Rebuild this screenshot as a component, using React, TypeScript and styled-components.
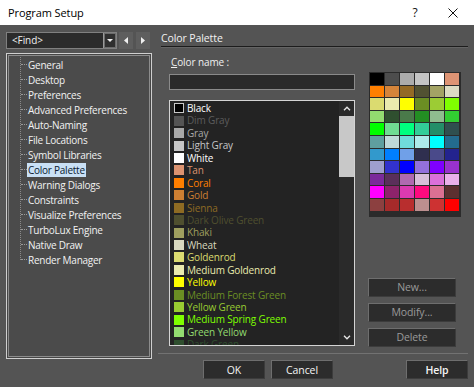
import React from "react";
import styled, { createGlobalStyle } from "styled-components";

const Global = createGlobalStyle`
  html, body { margin: 0; padding: 0; background: #545454; }
  body { font-family: "Open Sans", "Noto Sans", "DejaVu Sans", sans-serif; }
  #root { width: 474px; height: 387px; }
`;

const Window = styled.div`
  width: 474px;
  height: 387px;
  display: flex;
  flex-direction: column;
  background: #545454;
  overflow: hidden;
`;

const TitleBar = styled.div`
  height: 25px;
  flex-shrink: 0;
  background: #ffffff;
  display: flex;
  align-items: center;
  padding: 0 2px 0 8px;
  font-size: 11px;
  letter-spacing: -0.1px;
  color: #000;
`;

const Title = styled.span`
  flex: 1;
`;

const TitleButton = styled.div`
  width: 38px;
  height: 25px;
  display: flex;
  align-items: center;
  justify-content: center;
  font-size: 12px;
  color: #111;
`;

const Body = styled.div`
  flex: 1;
  display: flex;
  min-height: 0;
`;

const LeftCol = styled.div`
  width: 146px;
  padding: 7px 0 0 6px;
  display: flex;
  flex-direction: column;
  gap: 4px;
`;

const FindRow = styled.div`
  display: flex;
  align-items: stretch;
  height: 17px;
`;

const FindCombo = styled.div`
  width: 111px;
  display: flex;
  background: #2b2b2b;
  border: 1px solid #808080;
  box-sizing: border-box;
`;

const FindText = styled.div`
  flex: 1;
  color: #f0f0f0;
  font-size: 10px;
  letter-spacing: -0.1px;
  line-height: 15px;
  padding-left: 5px;
`;

const DropButton = styled.div`
  width: 12px;
  border-left: 1px solid #9a9a9a;
  box-shadow: inset 0 0 0 1px #6c6c6c;
  display: flex;
  align-items: center;
  justify-content: center;
  background: #2f2f2f;
`;

const NavButton = styled.div<{ $gap: number }>`
  width: 14px;
  margin-left: ${(p) => p.$gap}px;
  background: #5e5e5e;
  display: flex;
  align-items: center;
  justify-content: center;
`;

const Tree = styled.div`
  height: 306px;
  box-sizing: border-box;
  border: 1px solid #cfcfcf;
  box-shadow: inset 0 0 0 1px #464646, inset 0 0 0 2px #8c8c8c;
  background: #4b4b4b;
  padding: 3px 0 0 13px;
`;

const TreeList = styled.div`
  border-left: 1px dotted #8a8a8a;
  padding-left: 7px;
  height: 203px;
  box-sizing: border-box;
`;

const TreeItem = styled.div<{ $selected?: boolean }>`
  position: relative;
  height: 15px;
  display: flex;
  align-items: center;
  font-size: 10px;
  letter-spacing: -0.25px;
  color: #f2f2f2;
  white-space: nowrap;
  &::before {
    content: "";
    position: absolute;
    left: -7px;
    top: 7px;
    width: 6px;
    border-top: 1px dotted #9a9a9a;
  }
  span {
    padding: 0 1px;
    line-height: 14px;
    background: ${(p) => (p.$selected ? "#c9e0f5" : "transparent")};
    color: ${(p) => (p.$selected ? "#0a1a30" : "#f2f2f2")};
    margin-left: -1px;
  }
`;

const RightCol = styled.div`
  flex: 1;
  padding: 0 6px 0 9px;
  display: flex;
  flex-direction: column;
`;

const Header = styled.div`
  height: 22px;
  flex-shrink: 0;
  border-bottom: 1px solid #1c1c1c;
  box-shadow: 0 1px 0 #646464;
  color: #f2f2f2;
  font-size: 10.5px;
  letter-spacing: -0.1px;
  line-height: 14px;
  padding-top: 6px;
  box-sizing: border-box;
`;

const Content = styled.div`
  height: 306px;
  flex-shrink: 0;
  display: flex;
  gap: 14px;
  padding-left: 8px;
`;

const LeftSub = styled.div`
  width: 186px;
  display: flex;
  flex-direction: column;
`;

const Label = styled.div`
  margin-top: 8px;
  margin-left: 2px;
  height: 14px;
  line-height: 14px;
  font-size: 10px;
  letter-spacing: -0.1px;
  color: #f0f0f0;
  u { text-decoration: underline; text-underline-offset: 1px; }
`;

const Input = styled.div`
  margin-top: 5px;
  height: 16px;
  box-sizing: border-box;
  background: #2a2a2a;
  border: 1px solid #8a8a8a;
`;

const ListBox = styled.div`
  margin-top: 10px;
  height: 246px;
  box-sizing: border-box;
  border: 1px solid #d4d4d4;
  background: #232323;
  display: flex;
  overflow: hidden;
`;

const Items = styled.div`
  flex: 1;
  padding: 1px 0 0 4px;
  overflow: hidden;
`;

const Item = styled.div<{ $text: string }>`
  height: 12.45px;
  line-height: 12.45px;
  display: flex;
  align-items: center;
  gap: 3px;
  font-size: 10px;
  letter-spacing: -0.15px;
  color: ${(p) => p.$text};
  white-space: nowrap;
`;

const Swatch = styled.div<{ $color: string; $framed?: boolean }>`
  width: 10px;
  height: 10px;
  box-sizing: border-box;
  background: ${(p) => p.$color};
  border: 1px solid ${(p) => (p.$framed ? "#c8c8c8" : p.$color)};
  flex-shrink: 0;
`;

const ScrollBar = styled.div`
  width: 15px;
  display: flex;
  flex-direction: column;
  background: #2a2a2a;
`;

const ScrollArrow = styled.div`
  height: 15px;
  display: flex;
  align-items: center;
  justify-content: center;
`;

const Thumb = styled.div`
  height: 61px;
  background: #c8c8c8;
`;

const Track = styled.div`
  flex: 1;
`;

const RightSub = styled.div`
  width: 99px;
  padding-top: 25px;
  display: flex;
  flex-direction: column;
`;

const Palette = styled.div`
  width: fit-content;
  display: grid;
  grid-template-columns: repeat(6, 14px);
  grid-auto-rows: 11.6px;
  gap: 1px;
  padding: 1px 2px 6px 1px;
  background: #2b2b2b;
`;

const Cell = styled.div<{ $color: string }>`
  background: ${(p) => p.$color};
`;

const SideButtons = styled.div`
  margin-top: 61px;
  margin-left: -1px;
  display: flex;
  flex-direction: column;
  gap: 6px;
`;

const Btn = styled.div<{ $w: number; $disabled?: boolean; $strong?: boolean }>`
  width: ${(p) => p.$w}px;
  height: 19px;
  box-sizing: border-box;
  background: #2c2c2c;
  border: 1px solid #6e6e6e;
  border-right-color: #3c3c3c;
  border-bottom-color: #3c3c3c;
  display: flex;
  align-items: center;
  justify-content: center;
  font-size: 10.5px;
  letter-spacing: -0.1px;
  color: ${(p) => (p.$disabled ? "#9a9a9a" : "#f4f4f4")};
  font-weight: ${(p) => (p.$strong ? 600 : 400)};
`;

const Separator = styled.div`
  height: 1px;
  background: #727272;
  margin-left: -3px;
  flex-shrink: 0;
`;

const ButtonRow = styled.div`
  display: flex;
  padding: 6px 0 0 42px;
  gap: 6px;
`;

const Spacer = styled.div`
  flex: 1;
`;

const Tri = ({ dir }: { dir: "down" | "left" | "right" }) => {
  const pts =
    dir === "down" ? "0,0 6,0 3,3" : dir === "left" ? "4,0 4,7 0,3.5" : "0,0 0,7 4,3.5";
  const w = dir === "down" ? 6 : 4;
  const h = dir === "down" ? 3 : 7;
  return (
    <svg width={w} height={h} viewBox={`0 0 ${w} ${h}`}>
      <polygon points={pts} fill="#f0f0f0" />
    </svg>
  );
};

const Chevron = ({ up }: { up?: boolean }) => (
  <svg width="8" height="5" viewBox="0 0 8 5">
    <polyline
      points={up ? "1,4.2 4,1.2 7,4.2" : "1,0.8 4,3.8 7,0.8"}
      fill="none"
      stroke="#e8e8e8"
      strokeWidth="1.3"
    />
  </svg>
);

const treeItems = [
  "General",
  "Desktop",
  "Preferences",
  "Advanced Preferences",
  "Auto-Naming",
  "File Locations",
  "Symbol Libraries",
  "Color Palette",
  "Warning Dialogs",
  "Constraints",
  "Visualize Preferences",
  "TurboLux Engine",
  "Native Draw",
  "Render Manager",
];

const colors: { name: string; c: string; t?: string }[] = [
  { name: "Black", c: "#000000", t: "#ffffff" },
  { name: "Dim Gray", c: "#545454", t: "#5c5c5c" },
  { name: "Gray", c: "#a8a8a8" },
  { name: "Light Gray", c: "#c6c6c6" },
  { name: "White", c: "#ffffff" },
  { name: "Tan", c: "#db9370" },
  { name: "Coral", c: "#ff7f00" },
  { name: "Gold", c: "#cd7f32" },
  { name: "Sienna", c: "#8e6b23" },
  { name: "Dark Olive Green", c: "#4f4f2f" },
  { name: "Khaki", c: "#9f9f5f" },
  { name: "Wheat", c: "#d8d8bf" },
  { name: "Goldenrod", c: "#dbdb70" },
  { name: "Medium Goldenrod", c: "#eaeaae" },
  { name: "Yellow", c: "#ffff00" },
  { name: "Medium Forest Green", c: "#6b8e23" },
  { name: "Yellow Green", c: "#99cc32" },
  { name: "Medium Spring Green", c: "#7fff00" },
  { name: "Green Yellow", c: "#93db70" },
  { name: "Dark Green", c: "#2f4f2f" },
];

const palette = [
  "#000000", "#4d4d4d", "#acacac", "#c4c4c4", "#ffffff", "#de9474",
  "#ff7f00", "#d4843a", "#946a26", "#515132", "#a3a365", "#dcdcc3",
  "#dbdb70", "#eaeaae", "#ffff00", "#6b8e23", "#9ccc34", "#80ff00",
  "#93db70", "#2f4f2f", "#4a7a4a", "#238e23", "#8fbc8f", "#32cd32",
  "#00ff00", "#70db93", "#00ff7f", "#32cd99", "#238e68", "#2f4f4f",
  "#5f9f9f", "#c0d9d9", "#70dbdb", "#adeaea", "#00ffff", "#236b8e",
  "#3299cc", "#007fff", "#70a0e8", "#2f2f4f", "#4a4a8a", "#23238e",
  "#9f9fcf", "#3232cd", "#0000ff", "#9370db", "#7f00ff", "#9932cd",
  "#7a2a9a", "#5a2f5a", "#b06ab0", "#d8bfd8", "#db70db", "#eab0ea",
  "#ff00ff", "#8e236b", "#db3ab0", "#ff0a7f", "#db7093", "#5c3030",
  "#8c4040", "#a62a2a", "#b82e2e", "#bc8f8f", "#cd3232", "#ff0000",
];

export default function App() {
  return (
    <>
      <Global />
      <Window>
        <TitleBar>
          <Title>Program Setup</Title>
          <TitleButton>?</TitleButton>
          <TitleButton>
            <svg width="10" height="10" viewBox="0 0 10 10">
              <path d="M0.5 0.5 L9.5 9.5 M9.5 0.5 L0.5 9.5" stroke="#111" strokeWidth="1" />
            </svg>
          </TitleButton>
        </TitleBar>
        <Body>
          <LeftCol>
            <FindRow>
              <FindCombo>
                <FindText>&lt;Find&gt;</FindText>
                <DropButton>
                  <Tri dir="down" />
                </DropButton>
              </FindCombo>
              <NavButton $gap={2}>
                <Tri dir="left" />
              </NavButton>
              <NavButton $gap={3}>
                <Tri dir="right" />
              </NavButton>
            </FindRow>
            <Tree>
              <TreeList>
                {treeItems.map((t) => (
                  <TreeItem key={t} $selected={t === "Color Palette"}>
                    <span>{t}</span>
                  </TreeItem>
                ))}
              </TreeList>
            </Tree>
          </LeftCol>
          <RightCol>
            <Header>Color Palette</Header>
            <Content>
              <LeftSub>
                <Label>
                  <u>C</u>olor name :
                </Label>
                <Input />
                <ListBox>
                  <Items>
                    {colors.map((c) => (
                      <Item key={c.name} $text={c.t ?? c.c}>
                        <Swatch $color={c.c} $framed={c.name === "Black"} />
                        {c.name}
                      </Item>
                    ))}
                  </Items>
                  <ScrollBar>
                    <ScrollArrow>
                      <Chevron up />
                    </ScrollArrow>
                    <Thumb />
                    <Track />
                    <ScrollArrow>
                      <Chevron />
                    </ScrollArrow>
                  </ScrollBar>
                </ListBox>
              </LeftSub>
              <RightSub>
                <Palette>
                  {palette.map((p, i) => (
                    <Cell key={i} $color={p} />
                  ))}
                </Palette>
                <SideButtons>
                  <Btn $w={88} $disabled>New...</Btn>
                  <Btn $w={88} $disabled>Modify...</Btn>
                  <Btn $w={88} $disabled>Delete</Btn>
                </SideButtons>
              </RightSub>
            </Content>
            <Separator />
            <ButtonRow>
              <Btn $w={62}>OK</Btn>
              <Btn $w={62}>Cancel</Btn>
              <Spacer />
              <Btn $w={62} $strong>Help</Btn>
            </ButtonRow>
          </RightCol>
        </Body>
      </Window>
    </>
  );
}
